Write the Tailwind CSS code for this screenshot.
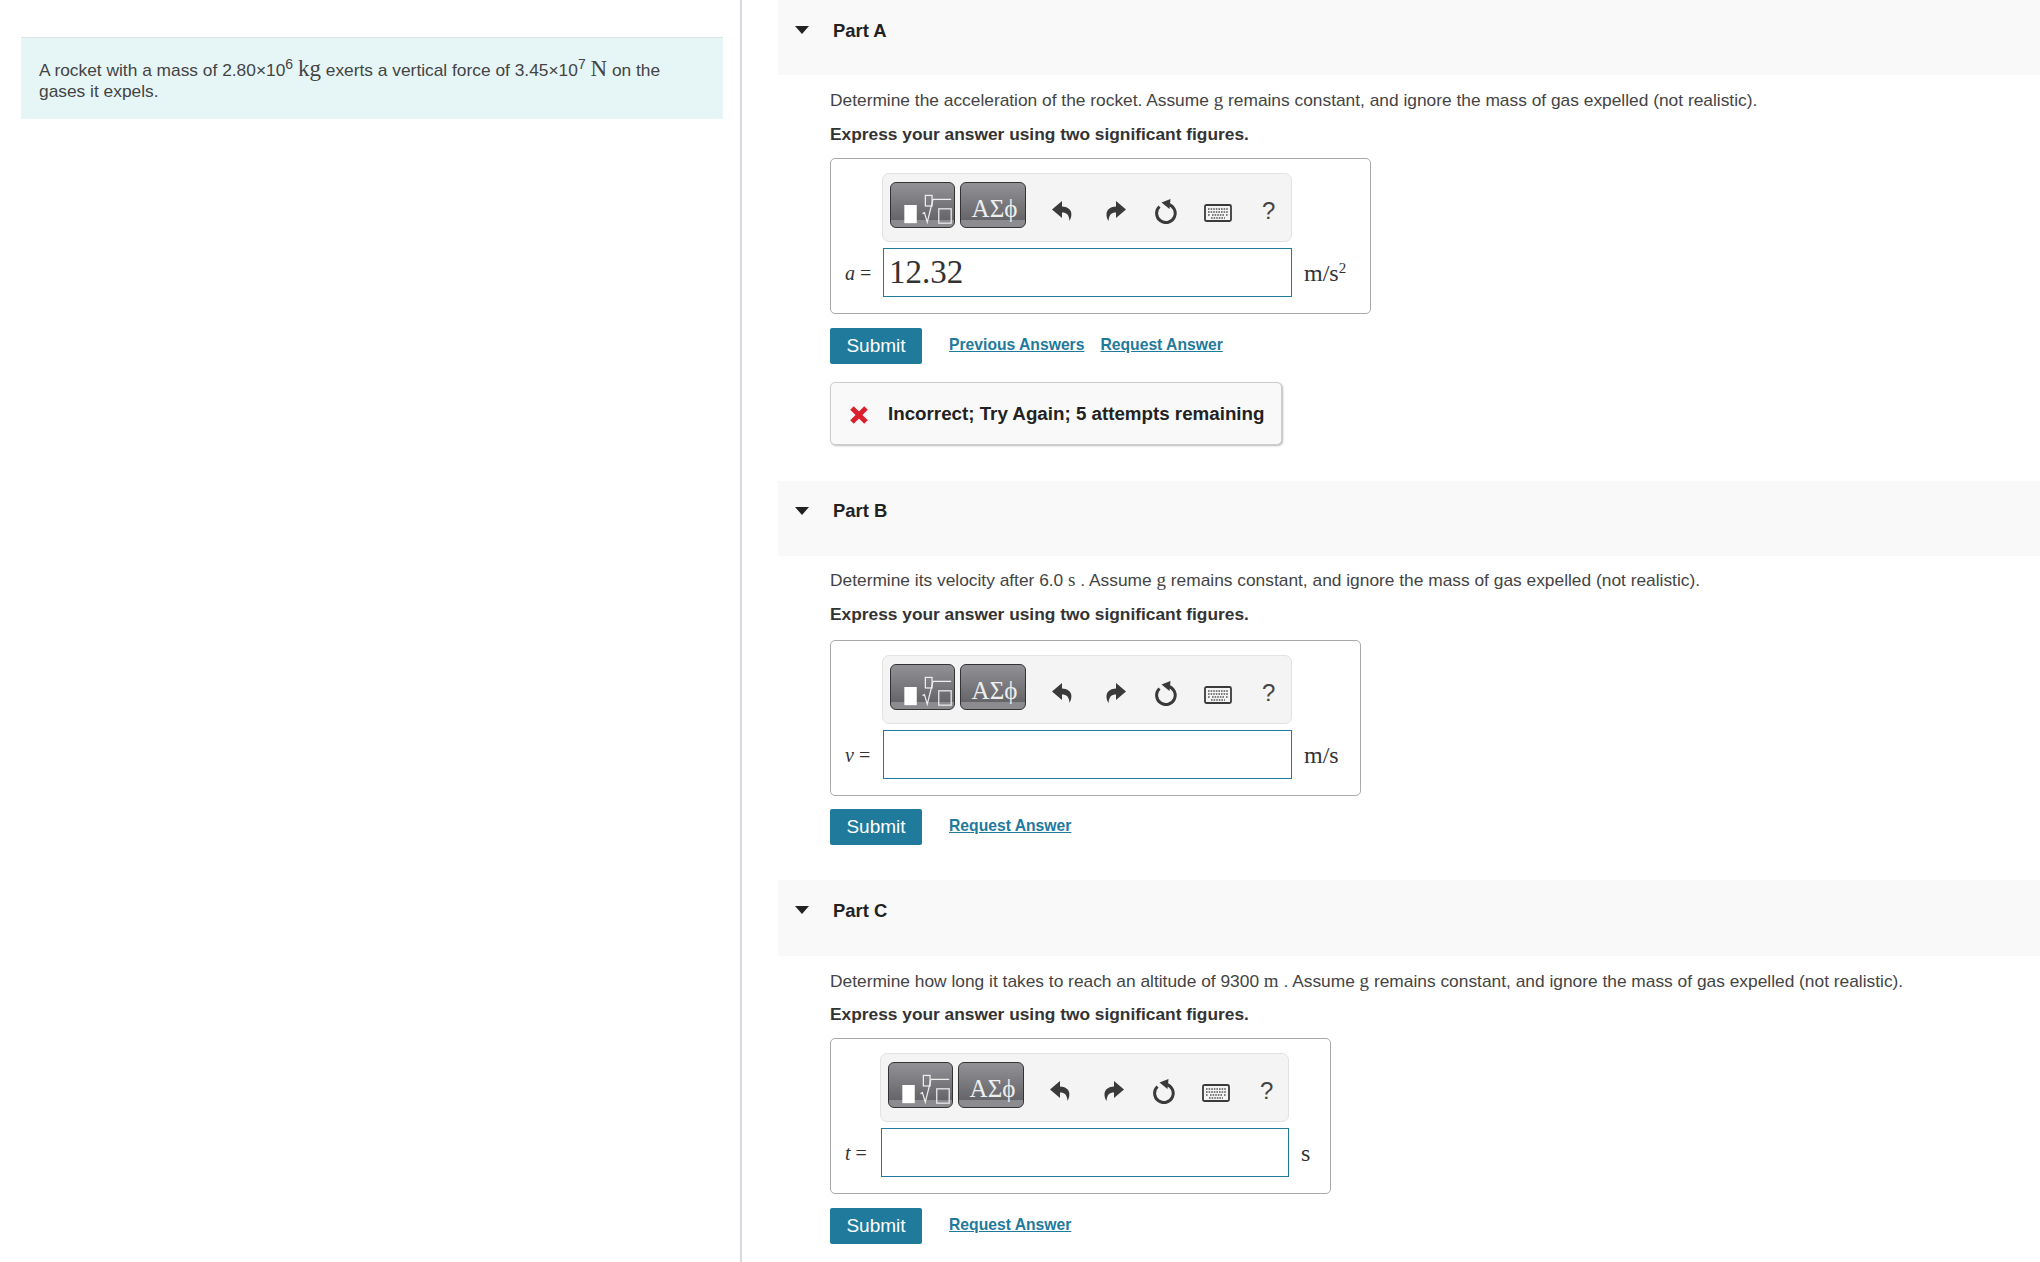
<!DOCTYPE html>
<html lang="en">
  <head>
    <meta charset="UTF-8" />
    <title>Rocket problem</title>
    <script src="https://cdn.jsdelivr.net/npm/@tailwindcss/browser@4"></script>
  </head>
  <body class="bg-white text-[#333] font-['Liberation_Sans',sans-serif] overflow-hidden">
    <!-- Shared toolbar icons -->
    <svg class="hidden">
      <symbol id="undo" viewBox="0 0 24 24"><path d="M11 2 1 10.500 11 19v-5.500c4.500 0 7 2 7.500 8.500 3.500-6 3-14-7.500-14.500z" fill="#3a3a3a"/></symbol>
      <symbol id="redo" viewBox="0 0 24 24"><path d="M13 2l10 8.500L13 19v-5.500c-4.500 0-7 2-7.500 8.500C2 16 2.500 8 13 7.500z" fill="#3a3a3a"/></symbol>
      <symbol id="reset" viewBox="0 0 26 26"><path d="M15 6.200a9.300 9.300 0 1 1-8.500 2.300" fill="none" stroke="#3a3a3a" stroke-width="3"/><path d="M8.500 4.500l9-3.500-1 10z" fill="#3a3a3a"/></symbol>
      <symbol id="keys" viewBox="0 0 28 18"><rect x="1" y="1" width="26" height="16" rx="1.500" fill="#f4f4f4" stroke="#3a3a3a" stroke-width="1.800"/><path d="M4 5h20M4 8h20M4 11h2M8 11h12M22 11h2M7 14h14" stroke="#555" stroke-width="1.600" stroke-dasharray="1.600 1"/></symbol>
      <symbol id="templates" viewBox="0 0 64 46">
        <rect x="13" y="23" width="13" height="19" fill="#fff"/>
        <path d="M32 32l2-1 3 10 6-24h19" fill="none" stroke="#eee" stroke-width="1.300"/>
        <rect x="35" y="13" width="7" height="11" fill="none" stroke="#eee" stroke-width="1.300"/>
        <rect x="49" y="27" width="13" height="15" fill="none" stroke="#eee" stroke-width="1.300"/>
      </symbol>
    </svg>

    <div class="flex h-[1262px]">
      <!-- Problem statement -->
      <aside class="w-[742px] shrink-0 border-r-2 border-[#d5d9e0] pt-[37px] pl-[21px] pr-[17px]">
        <div class="bg-[#e6f6f7] border-t border-[#d8e4e6] h-[82px] pl-[18px] pr-[60px] pt-[19px] text-[17.350px] leading-[21px] text-[#444]">
          A rocket with a mass of 2.80×10<sup class="text-[14px] leading-none">6</sup>
          <span class="font-['Liberation_Serif',serif] text-[23px] leading-none">kg</span> exerts a vertical force of 3.45×10<sup class="text-[14px] leading-none">7</sup>
          <span class="font-['Liberation_Serif',serif] text-[23px] leading-none">N</span> on the gases it expels.
        </div>
      </aside>

      <main class="flex-1 pl-[36px] min-w-0">
        <!-- Part A -->
        <section class="h-[481px]">
          <header class="h-[75px] bg-[#f9f9f9] flex items-start pt-[20px]">
            <span class="ml-[17px] mt-[6px] w-0 h-0 border-x-[7px] border-x-transparent border-t-[8px] border-t-[#222]"></span>
            <h2 class="ml-[24px] text-[18.400px] leading-[22px] font-bold text-[#222]">Part A</h2>
          </header>
          <div class="pl-[52px]">
            <p class="mt-[14px] text-[17.350px] leading-[22px] text-[#444]">Determine the acceleration of the rocket. Assume <span class="font-['Liberation_Serif',serif] text-[19px]">g</span> remains constant, and ignore the mass of gas expelled (not realistic).</p>
            <p class="mt-[12px] text-[17.330px] leading-[22px] font-bold">Express your answer using two significant figures.</p>
            <div class="mt-[13px] w-[541px] h-[156px] border border-[#aaa] rounded-[5px] pt-[14px] pl-[14px] grid grid-cols-[37px_410px_auto] grid-rows-[69px_49px] gap-y-[6px] bg-white">
              <div class="col-start-2 bg-[#f4f4f4] border border-[#e2e2e2] rounded-[7px] flex items-center pl-[7px]">
                <button class="w-[65px] h-[46px] -mt-[5px] rounded-[6px] border border-[#333] bg-[linear-gradient(#929296,#66666a_83%,#8c8c90_83%)]"><svg class="block w-[63px] h-[44px]"><use href="#templates"/></svg></button>
                <button class="ml-[5px] w-[66px] h-[46px] -mt-[5px] pt-[6px] pl-[3px] rounded-[6px] border border-[#333] bg-[linear-gradient(#929296,#66666a_83%,#8c8c90_83%)] font-['Liberation_Serif',serif] text-[25px] leading-none text-[#eee]">ΑΣϕ</button>
                <svg class="ml-[25px] w-[24px] h-[24px] mt-[7px]"><use href="#undo"/></svg>
                <svg class="ml-[28px] w-[24px] h-[24px] mt-[7px]"><use href="#redo"/></svg>
                <svg class="ml-[26px] w-[26px] h-[26px] mt-[6px]"><use href="#reset"/></svg>
                <svg class="ml-[25px] w-[28px] h-[18px] mt-[10px]"><use href="#keys"/></svg>
                <span class="ml-[30px] mt-[7px] text-[24px] text-[#444]">?</span>
              </div>
              <span class="row-start-2 self-center font-['Liberation_Serif',serif] text-[20px]"><i>a</i> =</span>
              <div class="row-start-2 ml-[1px] border border-[#1f7a9c] flex items-center pl-[5px] font-['Liberation_Serif',serif] text-[33px] text-[#333]">12.32</div>
              <span class="row-start-2 self-center ml-[12px] font-['Liberation_Serif',serif] text-[24px]">m/s<sup class="text-[15px] leading-none">2</sup></span>
            </div>
            <div class="mt-[14px] flex items-center">
              <button class="w-[92px] h-[36px] rounded-[2px] bg-[#1f7a9c] text-white text-[19px]">Submit</button>
              <a href="#" class="ml-[27px] -mt-[2px] text-[15.700px] font-bold text-[#1f7a9c] underline">Previous Answers</a>
              <a href="#" class="ml-[16px] -mt-[2px] text-[15.700px] font-bold text-[#1f7a9c] underline">Request Answer</a>
            </div>
            <div class="mt-[18px] w-[452px] h-[63px] bg-[#f9f9f9] border border-[#ccc] rounded-[5px] shadow-[1px_1px_2px_#bbb] flex items-center pl-[18px] pt-[2px]">
              <svg viewBox="0 0 20 20" class="w-[20px] h-[20px]"><path d="M3 3l14 14M17 3 3 17" stroke="#d9202c" stroke-width="5"/></svg>
              <span class="ml-[19px] text-[18.750px] font-bold text-[#222]">Incorrect; Try Again; 5 attempts remaining</span>
            </div>
          </div>
        </section>

        <!-- Part B -->
        <section class="h-[399px]">
          <header class="h-[75px] bg-[#f9f9f9] flex items-start pt-[19px]">
            <span class="ml-[17px] mt-[7px] w-0 h-0 border-x-[7px] border-x-transparent border-t-[8px] border-t-[#222]"></span>
            <h2 class="ml-[24px] text-[18.400px] leading-[22px] font-bold text-[#222]">Part B</h2>
          </header>
          <div class="pl-[52px]">
            <p class="mt-[13px] text-[17.350px] leading-[22px] text-[#444]">Determine its velocity after 6.0 <span class="font-['Liberation_Serif',serif] text-[19px]">s</span> . Assume <span class="font-['Liberation_Serif',serif] text-[19px]">g</span> remains constant, and ignore the mass of gas expelled (not realistic).</p>
            <p class="mt-[12px] text-[17.330px] leading-[22px] font-bold">Express your answer using two significant figures.</p>
            <div class="mt-[15px] w-[531px] h-[156px] border border-[#aaa] rounded-[5px] pt-[14px] pl-[14px] grid grid-cols-[37px_410px_auto] grid-rows-[69px_49px] gap-y-[6px] bg-white">
              <div class="col-start-2 bg-[#f4f4f4] border border-[#e2e2e2] rounded-[7px] flex items-center pl-[7px]">
                <button class="w-[65px] h-[46px] -mt-[5px] rounded-[6px] border border-[#333] bg-[linear-gradient(#929296,#66666a_83%,#8c8c90_83%)]"><svg class="block w-[63px] h-[44px]"><use href="#templates"/></svg></button>
                <button class="ml-[5px] w-[66px] h-[46px] -mt-[5px] pt-[6px] pl-[3px] rounded-[6px] border border-[#333] bg-[linear-gradient(#929296,#66666a_83%,#8c8c90_83%)] font-['Liberation_Serif',serif] text-[25px] leading-none text-[#eee]">ΑΣϕ</button>
                <svg class="ml-[25px] w-[24px] h-[24px] mt-[7px]"><use href="#undo"/></svg>
                <svg class="ml-[28px] w-[24px] h-[24px] mt-[7px]"><use href="#redo"/></svg>
                <svg class="ml-[26px] w-[26px] h-[26px] mt-[6px]"><use href="#reset"/></svg>
                <svg class="ml-[25px] w-[28px] h-[18px] mt-[10px]"><use href="#keys"/></svg>
                <span class="ml-[30px] mt-[7px] text-[24px] text-[#444]">?</span>
              </div>
              <span class="row-start-2 self-center font-['Liberation_Serif',serif] text-[20px]"><i>v</i> =</span>
              <div class="row-start-2 ml-[1px] border border-[#1f7a9c]"></div>
              <span class="row-start-2 self-center ml-[12px] font-['Liberation_Serif',serif] text-[24px]">m/s</span>
            </div>
            <div class="mt-[13px] flex items-center">
              <button class="w-[92px] h-[36px] rounded-[2px] bg-[#1f7a9c] text-white text-[19px]">Submit</button>
              <a href="#" class="ml-[27px] -mt-[2px] text-[15.700px] font-bold text-[#1f7a9c] underline">Request Answer</a>
            </div>
          </div>
        </section>

        <!-- Part C -->
        <section>
          <header class="h-[76px] bg-[#f9f9f9] flex items-start pt-[20px]">
            <span class="ml-[17px] mt-[6px] w-0 h-0 border-x-[7px] border-x-transparent border-t-[8px] border-t-[#222]"></span>
            <h2 class="ml-[24px] text-[18.400px] leading-[22px] font-bold text-[#222]">Part C</h2>
          </header>
          <div class="pl-[52px]">
            <p class="mt-[14px] text-[17.350px] leading-[22px] text-[#444]">Determine how long it takes to reach an altitude of 9300 <span class="font-['Liberation_Serif',serif] text-[19px]">m</span> . Assume <span class="font-['Liberation_Serif',serif] text-[19px]">g</span> remains constant, and ignore the mass of gas expelled (not realistic).</p>
            <p class="mt-[11px] text-[17.330px] leading-[22px] font-bold">Express your answer using two significant figures.</p>
            <div class="mt-[13px] w-[501px] h-[156px] border border-[#aaa] rounded-[5px] pt-[14px] pl-[14px] grid grid-cols-[35px_409px_auto] grid-rows-[69px_49px] gap-y-[6px] bg-white">
              <div class="col-start-2 bg-[#f4f4f4] border border-[#e2e2e2] rounded-[7px] flex items-center pl-[7px]">
                <button class="w-[65px] h-[46px] -mt-[5px] rounded-[6px] border border-[#333] bg-[linear-gradient(#929296,#66666a_83%,#8c8c90_83%)]"><svg class="block w-[63px] h-[44px]"><use href="#templates"/></svg></button>
                <button class="ml-[5px] w-[66px] h-[46px] -mt-[5px] pt-[6px] pl-[3px] rounded-[6px] border border-[#333] bg-[linear-gradient(#929296,#66666a_83%,#8c8c90_83%)] font-['Liberation_Serif',serif] text-[25px] leading-none text-[#eee]">ΑΣϕ</button>
                <svg class="ml-[25px] w-[24px] h-[24px] mt-[7px]"><use href="#undo"/></svg>
                <svg class="ml-[28px] w-[24px] h-[24px] mt-[7px]"><use href="#redo"/></svg>
                <svg class="ml-[26px] w-[26px] h-[26px] mt-[6px]"><use href="#reset"/></svg>
                <svg class="ml-[25px] w-[28px] h-[18px] mt-[10px]"><use href="#keys"/></svg>
                <span class="ml-[30px] mt-[7px] text-[24px] text-[#444]">?</span>
              </div>
              <span class="row-start-2 self-center font-['Liberation_Serif',serif] text-[20px]"><i>t</i> =</span>
              <div class="row-start-2 ml-[1px] border border-[#1f7a9c]"></div>
              <span class="row-start-2 self-center ml-[12px] font-['Liberation_Serif',serif] text-[24px]">s</span>
            </div>
            <div class="mt-[14px] flex items-center">
              <button class="w-[92px] h-[36px] rounded-[2px] bg-[#1f7a9c] text-white text-[19px]">Submit</button>
              <a href="#" class="ml-[27px] -mt-[2px] text-[15.700px] font-bold text-[#1f7a9c] underline">Request Answer</a>
            </div>
          </div>
        </section>
      </main>
    </div>
  </body>
</html>
